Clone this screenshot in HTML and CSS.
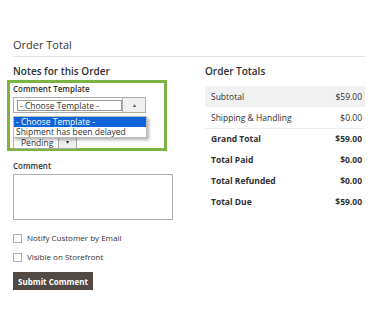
FILE: index.html
```html
<!DOCTYPE html>
<html lang="en">
<head>
    <meta charset="UTF-8">
    <meta name="viewport" content="width=device-width, initial-scale=1.0">
    <title>Order Total</title>
    <link rel="stylesheet" href="styles.css">
</head>
<body>

    <div class="page">
        <h1 class="section-title">Order Total</h1>

        <div class="columns">
            <!-- Notes -->
            <div class="notes">
                <h2>Notes for this Order</h2>

                <div class="highlight">
                    <label class="field-label">Comment Template</label>
                    <div class="template-select">
                        <div class="template-input">- Choose Template -</div>
                        <div class="template-arrow">&#9652;</div>
                    </div>

                    <!-- open dropdown -->
                    <ul class="dropdown">
                        <li class="selected">- Choose Template -</li>
                        <li>Shipment has been delayed</li>
                    </ul>

                    <div class="status-select">
                        <span class="status-value">Pending</span>
                        <span class="status-arrow">&#9662;</span>
                    </div>
                </div>

                <label class="field-label comment-label">Comment</label>
                <div class="comment-box"></div>

                <div class="check-row"><span class="check"></span>Notify Customer by Email</div>
                <div class="check-row"><span class="check"></span>Visible on Storefront</div>

                <button class="btn">Submit Comment</button>
            </div>

            <!-- Totals -->
            <div class="totals">
                <h2>Order Totals</h2>
                <table>
                    <tr class="shade"><td>Subtotal</td><td>$59.00</td></tr>
                    <tr class="line"><td>Shipping &amp; Handling</td><td>$0.00</td></tr>
                    <tr class="strong"><td>Grand Total</td><td>$59.00</td></tr>
                    <tr class="strong"><td>Total Paid</td><td>$0.00</td></tr>
                    <tr class="strong"><td>Total Refunded</td><td>$0.00</td></tr>
                    <tr class="strong"><td>Total Due</td><td>$59.00</td></tr>
                </table>
            </div>
        </div>
    </div>

</body>
</html>
```

FILE: styles.css
```css
* {
    box-sizing: border-box;
    margin: 0;
    padding: 0;
}

body {
    background: #fff;
    font-family: 'Open Sans', sans-serif;
    color: #303030;
}

.page {
    padding: 37px 9px 0 13px;
}

.section-title {
    font-size: 11px;
    font-weight: 400;
    color: #41362f;
    line-height: 15px;
    padding-bottom: 4px;
    border-bottom: 1px solid #e3e3e3;
}

.columns {
    display: flex;
    gap: 15px;
    padding-top: 7px;
}

.notes {
    width: 177px;
}

.totals {
    flex: 1;
}

h2 {
    font-size: 10px;
    font-weight: 600;
    color: #303030;
    line-height: 14px;
    margin-bottom: 2px;
}

.totals h2 {
    margin-bottom: 8px;
}

/* green annotation frame */
.highlight {
    position: relative;
    width: 160px;
    height: 71px;
    margin-left: -6px;
    border: 3px solid #7cb342;
    padding: 0 0 0 3px;
}

.field-label {
    display: block;
    font-size: 8px;
    font-weight: 600;
    line-height: 12px;
    color: #303030;
}

.template-select {
    display: flex;
    width: 133px;
    height: 16px;
    margin-top: 2px;
    border: 1px solid #adadad;
    background: #fff;
}

.template-input {
    flex: 1;
    margin: 2px 0 1px 3px;
    border: 1px solid #999;
    font-size: 8.5px;
    line-height: 9px;
    padding-left: 2px;
    color: #303030;
}

.template-arrow {
    width: 23px;
    border-left: 1px solid #adadad;
    background: #f0f0f0;
    font-size: 6px;
    text-align: center;
    line-height: 14px;
    color: #555;
}

.dropdown {
    position: absolute;
    left: 3px;
    top: 33px;
    width: 134px;
    list-style: none;
    background: #fff;
    border: 1px solid #bbb;
    box-shadow: 2px 2px 3px rgba(0, 0, 0, 0.3);
    font-size: 8.5px;
    line-height: 10px;
    z-index: 2;
}

.dropdown li {
    padding: 0 2px;
}

.dropdown li.selected {
    background: #1163d9;
    color: #fff;
}

.status-select {
    display: flex;
    width: 64px;
    height: 13px;
    margin-top: 23px;
    border: 1px solid #adadad;
    font-size: 8.5px;
    line-height: 11px;
}

.status-value {
    flex: 1;
    padding-left: 7px;
}

.status-arrow {
    width: 18px;
    border-left: 1px solid #adadad;
    background: #f0f0f0;
    font-size: 6px;
    text-align: center;
}

.comment-label {
    margin-top: 9px;
}

.comment-box {
    width: 160px;
    height: 46px;
    margin-top: 2px;
    border: 1px solid #adadad;
}

.check-row {
    display: flex;
    align-items: center;
    font-size: 8px;
    line-height: 10px;
    color: #303030;
    margin-top: 13px;
}

.check-row + .check-row {
    margin-top: 9px;
}

.check {
    width: 9px;
    height: 9px;
    border: 1px solid #adadad;
    margin-right: 5px;
}

.btn {
    display: block;
    margin-top: 10px;
    width: 80px;
    height: 18px;
    border: none;
    background: #514943;
    color: #fff;
    font-family: 'Open Sans', sans-serif;
    font-size: 8px;
    font-weight: 700;
}

table {
    width: 100%;
    border-collapse: collapse;
    font-size: 8.5px;
    color: #303030;
}

td {
    height: 21px;
    padding: 0 3px 0 6px;
}

td:last-child {
    text-align: right;
}

tr.shade td {
    background: #f1f1f1;
}

tr.line td {
    border-bottom: 1px solid #eee;
}

tr.strong td {
    font-weight: 700;
}
```
